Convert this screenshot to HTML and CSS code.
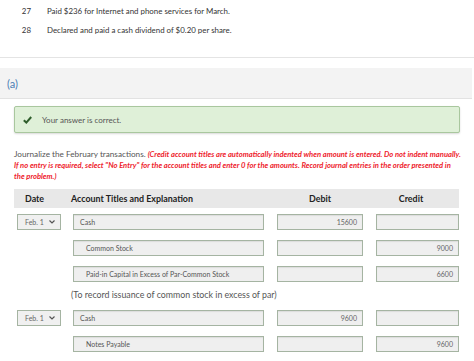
FILE: index.html
```html
<!DOCTYPE html>
<html lang="en">
<head>
    <meta charset="UTF-8">
    <title>Journal entries</title>
    <link rel="stylesheet" href="styles.css">
</head>
<body>
    <div class="events">
        <div class="event"><span class="day">27</span><span>Paid $236 for Internet and phone services for March.</span></div>
        <div class="event"><span class="day">28</span><span>Declared and paid a cash dividend of $0.20 per share.</span></div>
    </div>

    <div class="part-band">(a)</div>

    <div class="part-body">
        <div class="feedback">
            <svg class="check" width="9" height="8" viewBox="0 0 9 8"><path d="M0.8 4.3 L3.3 6.6 L8.2 1" fill="none" stroke="#2f5e2c" stroke-width="2"/></svg>
            <span>Your answer is correct.</span>
        </div>

        <p class="instructions">Journalize the February transactions. <em>(Credit account titles are automatically indented when amount is entered. Do not indent manually. If no entry is required, select "No Entry" for the account titles and enter 0 for the amounts. Record journal entries in the order presented in the&nbsp;problem.)</em></p>

        <div class="journal">
            <div class="head">
                <div class="h-date">Date</div>
                <div class="h-account">Account Titles and Explanation</div>
                <div class="h-amount">Debit</div>
                <div class="h-amount">Credit</div>
            </div>

            <div class="row">
                <div class="date"><span>Feb. 1</span><svg width="6" height="4" viewBox="0 0 6 4"><path d="M0.5 0.5 L3 3 L5.5 0.5" fill="none" stroke="#555" stroke-width="1.2"/></svg></div>
                <div class="field account">Cash</div>
                <div class="field debit">15600</div>
                <div class="field credit"></div>
            </div>
            <div class="row">
                <div></div>
                <div class="field account indent">Common Stock</div>
                <div class="field debit"></div>
                <div class="field credit">9000</div>
            </div>
            <div class="row">
                <div></div>
                <div class="field account indent">Paid-in Capital in Excess of Par-Common Stock</div>
                <div class="field debit"></div>
                <div class="field credit">6600</div>
            </div>
            <div class="explain">(To record issuance of common stock in excess of par)</div>

            <div class="row">
                <div class="date"><span>Feb. 1</span><svg width="6" height="4" viewBox="0 0 6 4"><path d="M0.5 0.5 L3 3 L5.5 0.5" fill="none" stroke="#555" stroke-width="1.2"/></svg></div>
                <div class="field account">Cash</div>
                <div class="field debit">9600</div>
                <div class="field credit"></div>
            </div>
            <div class="row">
                <div></div>
                <div class="field account indent">Notes Payable</div>
                <div class="field debit"></div>
                <div class="field credit">9600</div>
            </div>
        </div>
    </div>
</body>
</html>
```

FILE: styles.css
```css
body {
    margin: 0;
    font-family: Lato, "Open Sans", sans-serif;
    color: #444;
    background: #fff;
    overflow: hidden;
}
.events {
    padding-top: 1px;
    border-bottom: 1px solid #e4e4e4;
    height: 56px;
}
.event {
    display: flex;
    height: 19px;
    align-items: center;
    font-size: 7.9px;
    color: #333;
}
.day {
    width: 31px;
    text-align: right;
    margin-right: 16px;
}
.part-band {
    margin-top: 10px;
    width: 472px;
    height: 31px;
    background: #f3f3f3;
    border-bottom: 1px solid #e2e2e2;
    color: #4a7db3;
    font-size: 11px;
    line-height: 32px;
    padding-left: 7px;
    box-sizing: border-box;
}
.part-body {
    padding: 7px 14px 0 14px;
}
.feedback {
    display: flex;
    align-items: center;
    height: 25px;
    width: 444px;
    background: #dff0d8;
    border: 1px solid #a9c79e;
    border-radius: 2px;
    box-shadow: 0 1px 2px rgba(0,0,0,0.15);
    font-size: 8px;
    color: #555;
}
.check {
    margin-left: 8px;
    margin-right: 10px;
}
.instructions {
    margin: 16px 0 0 0;
    font-size: 8.2px;
    line-height: 10.8px;
    color: #555;
    width: 450px;
}
.instructions em {
    color: #ee1b2c;
    font-weight: bold;
    font-size: 7.62px;
}
.journal {
    margin-top: 8px;
    width: 445px;
}
.head {
    display: grid;
    grid-template-columns: 59px 204px 99px 83px;
    height: 19px;
    align-items: center;
    background: #e8e8e8;
    font-weight: bold;
    font-size: 8.9px;
    color: #222;
}
.h-date {
    padding-left: 11px;
}
.h-account {
    margin-left: -2px;
}
.h-amount {
    text-align: center;
    padding-right: 13px;
}
.row {
    display: grid;
    grid-template-columns: 59px 204px 99px 83px;
    height: 16px;
    margin-top: 10px;
}
.head + .row {
    margin-top: 6px;
}
.date {
    margin-left: 3px;
    width: 44px;
    height: 16px;
    box-sizing: border-box;
    border: 1px solid #a5b4a2;
    background: #f0f0f0;
    display: flex;
    align-items: center;
    justify-content: space-between;
    padding: 0 5px 0 7px;
    font-size: 7px;
    color: #666;
}
.field {
    height: 16px;
    box-sizing: border-box;
    border: 1px solid #a5b4a2;
    background: #efefef;
    font-size: 7px;
    color: #555;
    line-height: 14px;
    box-shadow: inset 0 1px 1px rgba(0,0,0,0.08);
}
.account {
    width: 191px;
    padding-left: 6px;
}
.indent {
    padding-left: 12px;
}
.debit, .credit {
    text-align: right;
    padding-right: 5px;
    color: #666;
}
.debit {
    width: 86px;
}
.credit {
    width: 83px;
}
.explain {
    margin: 6px 0 -2px 57px;
    font-size: 8.8px;
    color: #555;
    height: 14px;
    line-height: 14px;
}
```
